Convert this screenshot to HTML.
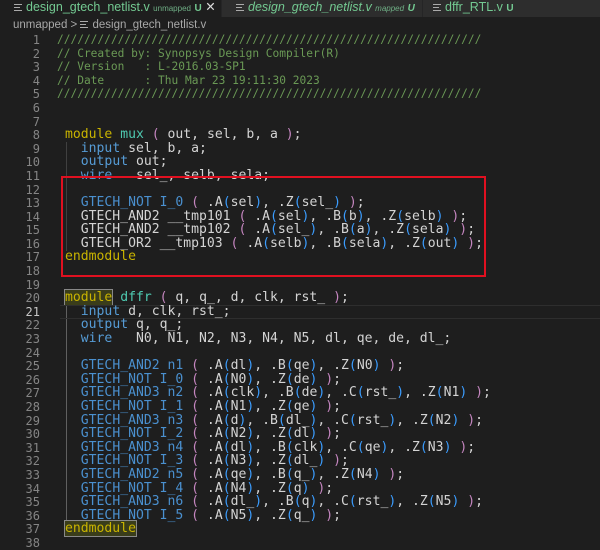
<!DOCTYPE html>
<html><head><meta charset="utf-8"><style>
*{margin:0;padding:0;box-sizing:border-box}
body{width:600px;height:545px;background:#1e1e1e;overflow:hidden;position:relative;font-family:"Liberation Sans",sans-serif}
.tabs{position:absolute;left:0;top:0;width:600px;height:17px;background:#252526}
.tab{position:absolute;top:0;height:17px;font-size:12.5px;line-height:15px;white-space:nowrap;color:#73c991;overflow:hidden}
.t1{left:0;width:221px;background:#1e1e1e;padding-left:14px}
.t2{left:222px;width:200px;background:#2d2d2d;padding-left:14px;font-style:italic}
.t3{left:423px;width:177px;background:#2d2d2d;padding-left:10px}
.ic{display:inline-block;width:8px;height:7px;border-top:1px solid #aaa;border-bottom:1px solid #aaa;position:relative;margin-right:4px;vertical-align:0px}
.ic:after{content:"";position:absolute;left:0;top:2px;width:6px;height:1px;background:#aaa}
.sm{font-size:8px;color:#6fae85}
.bc{position:absolute;left:13px;top:18px;font-size:11.5px;color:#a8a8a8;line-height:15px}
.ln{position:absolute;left:0;width:40px;text-align:right;font-family:"DejaVu Sans Mono",monospace;font-size:12px;color:#858585;height:14px;line-height:14px}
.c{position:absolute;left:65px;font-family:"DejaVu Sans Mono",monospace;font-size:13.1px;white-space:pre;color:#d4d4d4;height:14px;line-height:14px}
.h{left:57px;font-size:11.2px}
.cm{color:#6a9955}.k{color:#c9b400}.m{color:#4ec9b0}.t{color:#569cd6}.g{color:#4a90cf}.p{color:#c586c0}.b{color:#3b9dff}.a{color:#9cdcfe}
.box{position:absolute;left:61px;top:176px;width:425px;height:101px;border:2px solid #e01020}
.guide{position:absolute;left:66px;width:1px;background:#404040}
.mb{outline:1px solid #888;background:#3a3d1a}
</style></head><body>
<div class="tabs">
<div class="tab t1"><span class="ic"></span>design_gtech_netlist.v <span class="sm">unmapped</span> <b style="font-size:10px">U</b> <span style="color:#ddd">✕</span></div>
<div class="tab t2"><span class="ic"></span>design_gtech_netlist.v <span class="sm">mapped</span> <b style="font-size:10px">U</b></div>
<div class="tab t3"><span class="ic"></span>dffr_RTL.v <b style="font-size:10px">U</b></div>
</div>
<div class="bc">unmapped &gt; <span class="ic"></span>design_gtech_netlist.v</div>
<div class="guide" style="top:142px;height:109px"></div>
<div class="guide" style="top:305px;height:218px;background:#606060"></div>
<div class="ln" style="top:33px">1</div><div class="c h cm" style="top:33px">///////////////////////////////////////////////////////////////</div>
<div class="ln" style="top:47px">2</div><div class="c h cm" style="top:47px">// Created by: Synopsys Design Compiler(R)</div>
<div class="ln" style="top:60px">3</div><div class="c h cm" style="top:60px">// Version   : L-2016.03-SP1</div>
<div class="ln" style="top:74px">4</div><div class="c h cm" style="top:74px">// Date      : Thu Mar 23 19:11:30 2023</div>
<div class="ln" style="top:87px">5</div><div class="c h cm" style="top:87px">///////////////////////////////////////////////////////////////</div>
<div class="ln" style="top:101px">6</div>
<div class="ln" style="top:115px">7</div>
<div class="ln" style="top:128px">8</div><div class="c" style="top:128px"><span class="k">module</span> <span class="m">mux</span> <span class="p">(</span> out, sel, b, a <span class="p">)</span>;</div>
<div class="ln" style="top:142px">9</div><div class="c" style="top:142px">  <span class="t">input</span> sel, b, a;</div>
<div class="ln" style="top:155px">10</div><div class="c" style="top:155px">  <span class="t">output</span> out;</div>
<div class="ln" style="top:169px">11</div><div class="c" style="top:169px">  <span class="t">wire</span>   sel_, selb, sela;</div>
<div class="ln" style="top:183px">12</div>
<div class="ln" style="top:196px">13</div><div class="c" style="top:196px">  <span class="g">GTECH_NOT I_0</span> <span class="p">(</span> .A<span class="b">(</span>sel<span class="b">)</span>, .Z<span class="b">(</span>sel_<span class="b">)</span> <span class="p">)</span>;</div>
<div class="ln" style="top:210px">14</div><div class="c" style="top:210px">  GTECH_AND2 __tmp101 <span class="p">(</span> .A<span class="b">(</span>sel<span class="b">)</span>, .B<span class="b">(</span>b<span class="b">)</span>, .Z<span class="b">(</span>selb<span class="b">)</span> <span class="p">)</span>;</div>
<div class="ln" style="top:223px">15</div><div class="c" style="top:223px">  GTECH_AND2 __tmp102 <span class="p">(</span> .A<span class="b">(</span>sel_<span class="b">)</span>, .B<span class="b">(</span>a<span class="b">)</span>, .Z<span class="b">(</span>sela<span class="b">)</span> <span class="p">)</span>;</div>
<div class="ln" style="top:237px">16</div><div class="c" style="top:237px">  GTECH_OR2 __tmp103 <span class="p">(</span> .A<span class="b">(</span>selb<span class="b">)</span>, .B<span class="b">(</span>sela<span class="b">)</span>, .Z<span class="b">(</span>out<span class="b">)</span> <span class="p">)</span>;</div>
<div class="ln" style="top:250px">17</div><div class="c" style="top:250px"><span class="k">endmodule</span></div>
<div class="ln" style="top:264px">18</div>
<div class="ln" style="top:278px">19</div>
<div class="ln" style="top:291px">20</div><div class="c" style="top:291px"><span class="k mb">module</span> <span class="m">dffr</span> <span class="p">(</span> q, q_, d, clk, rst_ <span class="p">)</span>;</div>
<div style="position:absolute;left:60px;top:305px;width:540px;height:14px;border-top:1px solid #2e2e2e;border-bottom:1px solid #2e2e2e"></div>
<div class="ln" style="top:305px;color:#c6c6c6">21</div><div class="c" style="top:305px">  <span class="t">input</span> d, clk, rst_;</div>
<div class="ln" style="top:318px">22</div><div class="c" style="top:318px">  <span class="t">output</span> q, q_;</div>
<div class="ln" style="top:332px">23</div><div class="c" style="top:332px">  <span class="t">wire</span>   N0, N1, N2, N3, N4, N5, dl, qe, de, dl_;</div>
<div class="ln" style="top:346px">24</div>
<div class="ln" style="top:359px">25</div><div class="c" style="top:359px">  <span class="g">GTECH_AND2 n1</span> <span class="p">(</span> .A<span class="b">(</span>dl<span class="b">)</span>, .B<span class="b">(</span>qe<span class="b">)</span>, .Z<span class="b">(</span>N0<span class="b">)</span> <span class="p">)</span>;</div>
<div class="ln" style="top:373px">26</div><div class="c" style="top:373px">  <span class="g">GTECH_NOT I_0</span> <span class="p">(</span> .A<span class="b">(</span>N0<span class="b">)</span>, .Z<span class="b">(</span>de<span class="b">)</span> <span class="p">)</span>;</div>
<div class="ln" style="top:386px">27</div><div class="c" style="top:386px">  <span class="g">GTECH_AND3 n2</span> <span class="p">(</span> .A<span class="b">(</span>clk<span class="b">)</span>, .B<span class="b">(</span>de<span class="b">)</span>, .C<span class="b">(</span>rst_<span class="b">)</span>, .Z<span class="b">(</span>N1<span class="b">)</span> <span class="p">)</span>;</div>
<div class="ln" style="top:400px">28</div><div class="c" style="top:400px">  <span class="g">GTECH_NOT I_1</span> <span class="p">(</span> .A<span class="b">(</span>N1<span class="b">)</span>, .Z<span class="b">(</span>qe<span class="b">)</span> <span class="p">)</span>;</div>
<div class="ln" style="top:414px">29</div><div class="c" style="top:414px">  <span class="g">GTECH_AND3 n3</span> <span class="p">(</span> .A<span class="b">(</span>d<span class="b">)</span>, .B<span class="b">(</span>dl_<span class="b">)</span>, .C<span class="b">(</span>rst_<span class="b">)</span>, .Z<span class="b">(</span>N2<span class="b">)</span> <span class="p">)</span>;</div>
<div class="ln" style="top:427px">30</div><div class="c" style="top:427px">  <span class="g">GTECH_NOT I_2</span> <span class="p">(</span> .A<span class="b">(</span>N2<span class="b">)</span>, .Z<span class="b">(</span>dl<span class="b">)</span> <span class="p">)</span>;</div>
<div class="ln" style="top:441px">31</div><div class="c" style="top:441px">  <span class="g">GTECH_AND3 n4</span> <span class="p">(</span> .A<span class="b">(</span>dl<span class="b">)</span>, .B<span class="b">(</span>clk<span class="b">)</span>, .C<span class="b">(</span>qe<span class="b">)</span>, .Z<span class="b">(</span>N3<span class="b">)</span> <span class="p">)</span>;</div>
<div class="ln" style="top:454px">32</div><div class="c" style="top:454px">  <span class="g">GTECH_NOT I_3</span> <span class="p">(</span> .A<span class="b">(</span>N3<span class="b">)</span>, .Z<span class="b">(</span>dl_<span class="b">)</span> <span class="p">)</span>;</div>
<div class="ln" style="top:468px">33</div><div class="c" style="top:468px">  <span class="g">GTECH_AND2 n5</span> <span class="p">(</span> .A<span class="b">(</span>qe<span class="b">)</span>, .B<span class="b">(</span>q_<span class="b">)</span>, .Z<span class="b">(</span>N4<span class="b">)</span> <span class="p">)</span>;</div>
<div class="ln" style="top:482px">34</div><div class="c" style="top:482px">  <span class="g">GTECH_NOT I_4</span> <span class="p">(</span> .A<span class="b">(</span>N4<span class="b">)</span>, .Z<span class="b">(</span>q<span class="b">)</span> <span class="p">)</span>;</div>
<div class="ln" style="top:495px">35</div><div class="c" style="top:495px">  <span class="g">GTECH_AND3 n6</span> <span class="p">(</span> .A<span class="b">(</span>dl_<span class="b">)</span>, .B<span class="b">(</span>q<span class="b">)</span>, .C<span class="b">(</span>rst_<span class="b">)</span>, .Z<span class="b">(</span>N5<span class="b">)</span> <span class="p">)</span>;</div>
<div class="ln" style="top:509px">36</div><div class="c" style="top:509px">  <span class="g">GTECH_NOT I_5</span> <span class="p">(</span> .A<span class="b">(</span>N5<span class="b">)</span>, .Z<span class="b">(</span>q_<span class="b">)</span> <span class="p">)</span>;</div>
<div class="ln" style="top:522px">37</div><div class="c" style="top:522px"><span class="k mb">endmodule</span></div>
<div class="ln" style="top:536px">38</div>
<div class="box"></div>
</body></html>
